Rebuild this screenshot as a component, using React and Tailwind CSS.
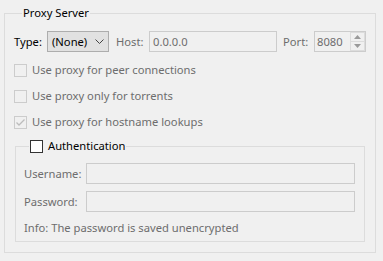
const font = { fontFamily: '"Noto Sans", "Open Sans", sans-serif' };

function Check({ checked, disabled }) {
  return (
    <span
      className={`w-[13px] h-[13px] border flex items-center justify-center shrink-0 ${
        disabled ? 'border-[#cccccc] bg-[#f0f0f0]' : 'border-[#333333] bg-white'
      }`}
    >
      {checked && (
        <svg width="11" height="11" viewBox="0 0 11 11">
          <path d="M1.5 5.5 L4 8 L9.5 2.5" fill="none" stroke="#bcbcbc" strokeWidth="1.3" />
        </svg>
      )}
    </span>
  );
}

function CheckRow({ label, checked }) {
  return (
    <div className="h-[26px] flex items-center gap-[5px]">
      <Check checked={checked} disabled />
      <span className="text-[#6d6d6d]">{label}</span>
    </div>
  );
}

function Field({ label }) {
  return (
    <div className="flex items-center h-[21px]">
      <span className="w-[62px] text-[#6d6d6d]">{label}</span>
      <div className="flex-1 h-[21px] border border-[#cccccc] bg-[#f0f0f0]" />
    </div>
  );
}

export default function App() {
  return (
    <div className="w-[383px] h-[261px] bg-[#f0f0f0] pt-[5px] px-[4px] text-[11.2px] leading-[16px] text-black" style={font}>
      <fieldset className="w-[372px] h-[248px] border border-[#dcdcdc] pl-[9px] pr-[9px] pt-[10px]">
        <legend className="ml-[8px] px-[1px]">Proxy Server</legend>

        <div className="flex items-center h-[21px]">
          <span className="w-[33px]">Type:</span>
          <div className="w-[62px] h-[21px] border border-[#adadad] bg-[#e1e1e1] flex items-center pl-[4px] pr-[4px]">
            <span className="flex-1">(None)</span>
            <svg width="9" height="6" viewBox="0 0 9 6">
              <path d="M0.5 0.5 L4.5 4.5 L8.5 0.5" fill="none" stroke="#444" strokeWidth="1" />
            </svg>
          </div>
          <span className="ml-[7px] w-[33px] text-[#6d6d6d]">Host:</span>
          <div className="w-[128px] h-[21px] border border-[#cccccc] bg-[#f0f0f0] flex items-center pl-[3px] text-[#6d6d6d]">
            0.0.0.0
          </div>
          <span className="ml-[6px] w-[31px] text-[#6d6d6d]">Port:</span>
          <div className="w-[52px] h-[21px] border border-[#cccccc] bg-[#f0f0f0] flex items-center pl-[2px] text-[#6d6d6d]">
            <span className="flex-1">8080</span>
            <div className="w-[15px] h-[19px] flex flex-col">
              <div className="flex-1 border border-[#dcdcdc] flex items-center justify-center">
                <svg width="7" height="4" viewBox="0 0 7 4"><path d="M0 4 L3.5 0 L7 4 Z" fill="#9a9a9a" /></svg>
              </div>
              <div className="flex-1 border border-[#dcdcdc] border-t-0 flex items-center justify-center">
                <svg width="7" height="4" viewBox="0 0 7 4"><path d="M0 0 L3.5 4 L7 0 Z" fill="#9a9a9a" /></svg>
              </div>
            </div>
          </div>
        </div>

        <div className="mt-[5px]">
          <CheckRow label="Use proxy for peer connections" />
          <CheckRow label="Use proxy only for torrents" />
          <CheckRow label="Use proxy for hostname lookups" checked />
        </div>

        <fieldset className="mt-[3px] ml-[1px] mr-[1px] h-[104px] border border-[#dcdcdc] pl-[8px] pr-[9px] pt-[9px]">
          <legend className="ml-[5px] px-[1px] flex items-center gap-[5px]">
            <Check />
            <span>Authentication</span>
          </legend>
          <div className="flex flex-col gap-[7px]">
            <Field label="Username:" />
            <Field label="Password:" />
          </div>
          <div className="mt-[8px] text-[#6d6d6d]">Info: The password is saved unencrypted</div>
        </fieldset>
      </fieldset>
    </div>
  );
}
